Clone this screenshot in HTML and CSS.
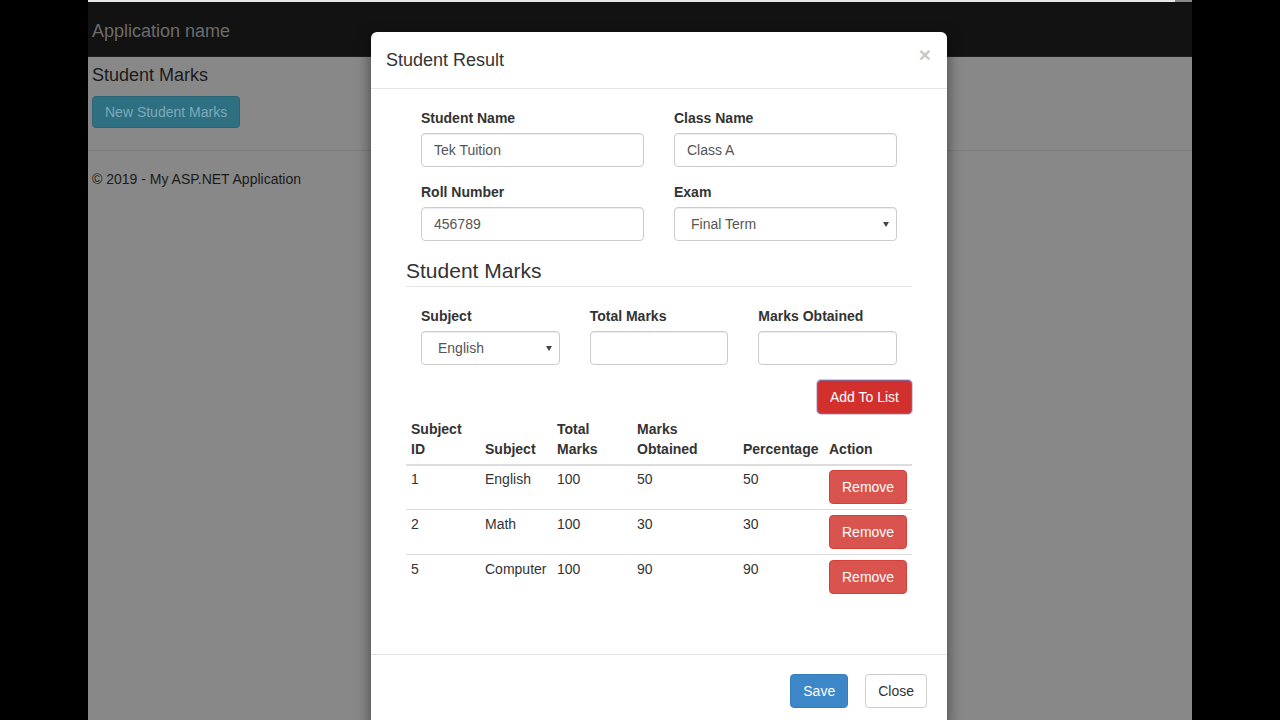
FILE: index.html
```html
<!DOCTYPE html>
<html lang="en">
<head>
<meta charset="utf-8">
<title>Student Marks</title>
<link rel="stylesheet" href="styles.css">
</head>
<body>
<div class="stage">
  <div class="topstrip"></div>
  <header class="navbar"><span class="brand">Application name</span></header>
  <main class="page">
    <h2 class="page-title">Student Marks</h2>
    <button class="btn btn-info-dim">New Student Marks</button>
    <hr class="page-rule">
    <footer class="page-footer">© 2019 - My ASP.NET Application</footer>
  </main>

  <div class="modal">
    <div class="modal-header">
      <h4 class="modal-title">Student Result</h4>
      <span class="close">×</span>
    </div>
    <div class="modal-body">
      <div class="grid2">
        <div class="form-group">
          <label>Student Name</label>
          <input class="form-control" type="text" value="Tek Tuition">
        </div>
        <div class="form-group">
          <label>Class Name</label>
          <input class="form-control" type="text" value="Class A">
        </div>
        <div class="form-group">
          <label>Roll Number</label>
          <input class="form-control" type="text" value="456789">
        </div>
        <div class="form-group">
          <label>Exam</label>
          <div class="select-wrap">
            <select class="form-control select"><option>Final Term</option></select>
          </div>
        </div>
      </div>

      <h4 class="section-title">Student Marks</h4>

      <div class="grid3">
        <div class="form-group">
          <label>Subject</label>
          <div class="select-wrap">
            <select class="form-control select"><option>English</option></select>
          </div>
        </div>
        <div class="form-group">
          <label>Total Marks</label>
          <input class="form-control" type="text" value="">
        </div>
        <div class="form-group">
          <label>Marks Obtained</label>
          <input class="form-control" type="text" value="">
        </div>
      </div>

      <div class="add-row">
        <button class="btn btn-add">Add To List</button>
      </div>

      <table class="marks">
        <colgroup>
          <col class="c1"><col class="c2"><col class="c3"><col class="c4"><col class="c5"><col class="c6">
        </colgroup>
        <thead>
          <tr>
            <th>Subject<br>ID</th>
            <th>Subject</th>
            <th>Total<br>Marks</th>
            <th>Marks<br>Obtained</th>
            <th>Percentage</th>
            <th>Action</th>
          </tr>
        </thead>
        <tbody>
          <tr>
            <td>1</td><td>English</td><td>100</td><td>50</td><td>50</td>
            <td><button class="btn btn-danger">Remove</button></td>
          </tr>
          <tr>
            <td>2</td><td>Math</td><td>100</td><td>30</td><td>30</td>
            <td><button class="btn btn-danger">Remove</button></td>
          </tr>
          <tr>
            <td>5</td><td>Computer</td><td>100</td><td>90</td><td>90</td>
            <td><button class="btn btn-danger">Remove</button></td>
          </tr>
        </tbody>
      </table>
    </div>
    <div class="modal-footer">
      <button class="btn btn-primary">Save</button>
      <button class="btn btn-default">Close</button>
    </div>
  </div>
</div>
</body>
</html>
```

FILE: styles.css
```css
* { box-sizing: border-box; }

html, body {
  margin: 0;
  padding: 0;
  background: #000;
  font-family: "Liberation Sans", Arial, Helvetica, sans-serif;
  font-size: 14px;
  line-height: 20px;
  color: #333;
}

.stage {
  position: relative;
  width: 1104px;
  height: 720px;
  margin-left: 88px;
  background: #888;
  overflow: hidden;
}

.topstrip {
  width: 1087px;
  height: 2px;
  background: #e6e6e6;
}

.navbar {
  height: 55px;
  background: #121212;
  border-bottom: 1px solid #1e1e1e;
  display: flex;
  align-items: center;
  padding-left: 4px;
}

.brand {
  font-size: 18px;
  line-height: 20px;
  color: #6c6c6c;
  margin-top: 4px;
}

.page {
  padding: 0 4px;
}

.page-title {
  margin: 8px 0 11px;
  font-size: 18px;
  line-height: 20px;
  font-weight: normal;
  color: #1b1b1b;
}

.btn {
  display: inline-block;
  font-family: inherit;
  font-size: 14px;
  line-height: 20px;
  padding: 6px 12px;
  border: 1px solid transparent;
  border-radius: 4px;
  cursor: pointer;
}

.btn-info-dim {
  height: 32px;
  line-height: 18px;
  background: #2e6f82;
  border-color: #296476;
  color: #7eaab8;
}

.page-rule {
  margin: 22px -4px 18px;
  border: 0;
  border-top: 1px solid #7c7c7c;
}

.page-footer {
  color: #1b1b1b;
  font-size: 14px;
  line-height: 20px;
}

/* Modal */
.modal {
  position: absolute;
  left: 283px;
  top: 32px;
  width: 576px;
  background: #fff;
  border-radius: 6px;
  box-shadow: 0 5px 15px rgba(0, 0, 0, 0.5);
}

.modal-header {
  display: flex;
  justify-content: space-between;
  align-items: flex-start;
  padding: 16px 15px 15px 15px;
  border-bottom: 1px solid #e5e5e5;
}

.modal-title {
  margin: 0;
  font-size: 18px;
  line-height: 25px;
  font-weight: normal;
  color: #333;
}

.close {
  font-size: 21px;
  font-weight: bold;
  line-height: 1;
  color: #c8c8c8;
  margin-top: -4px;
  margin-right: 1px;
}

.modal-body {
  padding: 19px 35px 20px;
}

.grid2 {
  display: grid;
  grid-template-columns: 1fr 1fr;
  column-gap: 30px;
  padding: 0 15px;
}

.grid3 {
  display: grid;
  grid-template-columns: 1fr 1fr 1fr;
  column-gap: 30px;
  padding: 0 15px;
}

.form-group {
  margin-bottom: 15px;
}

.form-group label {
  display: block;
  font-weight: bold;
  margin-bottom: 5px;
  color: #333;
}

.form-control {
  display: block;
  width: 100%;
  height: 34px;
  padding: 6px 12px;
  font-family: inherit;
  font-size: 14px;
  line-height: 20px;
  color: #555;
  background: #fff;
  border: 1px solid #ccc;
  border-radius: 4px;
  box-shadow: inset 0 1px 1px rgba(0, 0, 0, 0.075);
}

.select-wrap {
  position: relative;
}

.select {
  -webkit-appearance: none;
  appearance: none;
  padding-left: 16px;
}

.select-wrap::after {
  content: "";
  position: absolute;
  right: 8px;
  top: 15px;
  border-left: 3px solid transparent;
  border-right: 3px solid transparent;
  border-top: 5px solid #444;
}

.section-title {
  margin: 3px 0 19px;
  font-size: 21px;
  line-height: 24px;
  font-weight: normal;
  color: #333;
  padding-bottom: 3px;
  border-bottom: 1px solid #e5e5e5;
}

.add-row {
  display: flex;
  justify-content: flex-end;
}

.btn-add {
  height: 34px;
  background: #d2302d;
  color: #fff;
  border-color: #8c5f8c;
  box-shadow: 0 0 0 1px rgba(120, 110, 170, 0.35);
}

.marks {
  width: 100%;
  table-layout: fixed;
  border-collapse: collapse;
  margin-bottom: 35px;
}

.c1 { width: 74px; }
.c2 { width: 72px; }
.c3 { width: 80px; }
.c4 { width: 106px; }
.c5 { width: 86px; }
.c6 { width: 88px; }

.marks th {
  text-align: left;
  vertical-align: bottom;
  font-weight: bold;
  padding: 5px;
  border-bottom: 2px solid #ddd;
  color: #333;
}

.marks td {
  vertical-align: top;
  padding: 4px 5px 5px;
  border-top: 1px solid #ddd;
  color: #333;
}

.marks tbody tr:first-child td {
  border-top: 0;
}

.marks tbody tr:first-child td:not(:last-child) {
  padding-top: 3px;
}

.marks tbody tr + tr td {
  padding-top: 5px;
}

.marks tbody tr + tr td:not(:last-child) {
  padding-top: 4px;
}

.btn-danger {
  height: 34px;
  background: #d9534f;
  border-color: #d43f3a;
  color: #fff;
}

.modal-footer {
  display: flex;
  justify-content: flex-end;
  gap: 17px;
  padding: 19px 20px 20px;
  border-top: 1px solid #e5e5e5;
}

.btn-primary {
  height: 34px;
  background: #3d87c9;
  border-color: #357ebd;
  color: #fff;
}

.btn-default {
  height: 34px;
  background: #fff;
  border-color: #ccc;
  color: #333;
}
```
